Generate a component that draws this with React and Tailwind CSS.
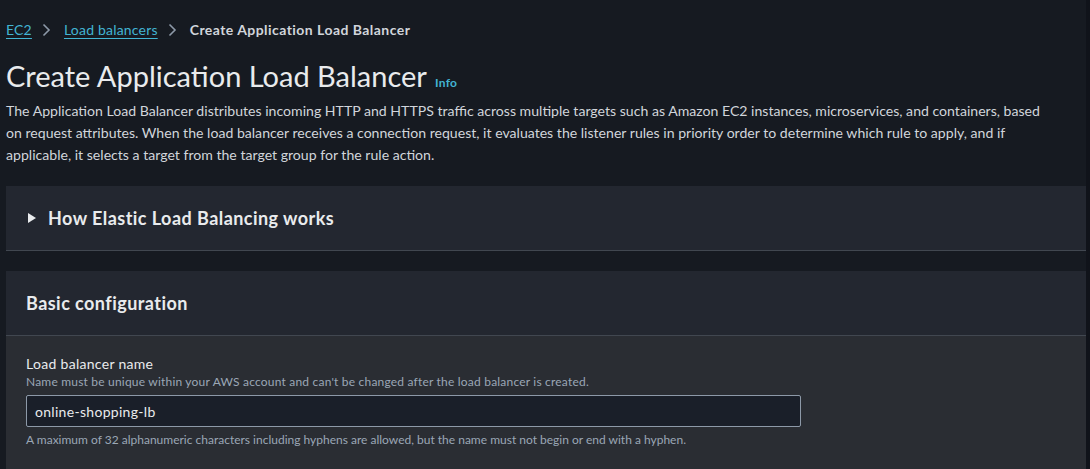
import React from "react";

function Chevron() {
  return (
    <svg width="10" height="14" viewBox="0 0 10 14" className="ml-[9px] mr-[13px] shrink-0">
      <path d="M2.5 1.5 L8 7 L2.5 12.5" fill="none" stroke="#8d99a8" strokeWidth="1.6" />
    </svg>
  );
}

export default function App() {
  return (
    <div
      className="w-[1090px] h-[469px] overflow-hidden bg-[#161a21] flex"
      style={{ fontFamily: "Lato, 'Open Sans', sans-serif" }}
    >
      <div className="w-[1086px] pl-[6px] flex flex-col">
        {/* breadcrumb */}
        <div className="shrink-0 flex items-center h-[20px] mt-[20px] text-[14px] leading-[20px]">
          <span className="text-[#42b4d3] underline underline-offset-[3px] decoration-[#42b4d3] tracking-[0.2px]">EC2</span>
          <Chevron />
          <span className="text-[#42b4d3] underline underline-offset-[3px] decoration-[#42b4d3] tracking-[0.2px]">Load balancers</span>
          <Chevron />
          <span className="text-[#d1d5db] font-bold tracking-[0.45px]">Create Application Load Balancer</span>
        </div>

        {/* title */}
        <div className="shrink-0 flex items-baseline mt-[19px]">
          <h1 className="text-[29px] leading-[34px] text-[#e9ebed] font-normal">Create Application Load Balancer</h1>
          <span className="ml-[8px] text-[12px] font-bold text-[#42b4d3] tracking-[0.3px]">Info</span>
        </div>

        <p className="shrink-0 mt-[7px] w-[1050px] text-[14.1px] leading-[22px] text-[#d1d5db]">
          The Application Load Balancer distributes incoming HTTP and HTTPS traffic across multiple targets such as Amazon EC2 instances, microservices, and containers, based on request attributes. When the load balancer receives a connection request, it evaluates the listener rules in priority order to determine which rule to apply, and if applicable, it selects a target from the target group for the rule action.
        </p>

        {/* panel 1 */}
        <div className="shrink-0 mt-[20px] h-[65px] bg-[#232730] border-b border-[#414750] flex items-center pl-[21px]">
          <svg width="10" height="12" viewBox="0 0 10 12" className="mr-[11px]">
            <path d="M1 1 L9 6 L1 11 Z" fill="#e9ebed" />
          </svg>
          <span className="text-[18px] font-bold text-[#e9ebed] tracking-[0.45px]">How Elastic Load Balancing works</span>
        </div>

        {/* panel 2 */}
        <div className="shrink-0 mt-[20px] flex flex-col">
          <div className="shrink-0 h-[65px] bg-[#232730] border-b border-[#414750] flex items-center pl-[20px]">
            <span className="text-[18px] font-bold text-[#e9ebed] tracking-[0.45px]">Basic configuration</span>
          </div>
          <div className="bg-[#2a2d33] pl-[20px] pt-[18px] pb-[40px]">
            <div className="text-[14px] leading-[20px] text-[#e9ebed] tracking-[0.3px]">Load balancer name</div>
            <div className="text-[12px] leading-[16px] text-[#9ba7b6] tracking-[0.2px]">
              Name must be unique within your AWS account and can't be changed after the load balancer is created.
            </div>
            <div className="mt-[5px] w-[775px] h-[32px] bg-[#1a1f29] border border-[#8d99a8] rounded-[2px] flex items-center pl-[8px] text-[14px] text-[#e9ebed] tracking-[0.3px]">
              online-shopping-lb
            </div>
            <div className="mt-[5px] text-[12px] leading-[16px] text-[#9ba7b6]">
              A maximum of 32 alphanumeric characters including hyphens are allowed, but the name must not begin or end with a hyphen.
            </div>
          </div>
        </div>
      </div>
      <div className="w-[4px] bg-[#10131a]" />
    </div>
  );
}
